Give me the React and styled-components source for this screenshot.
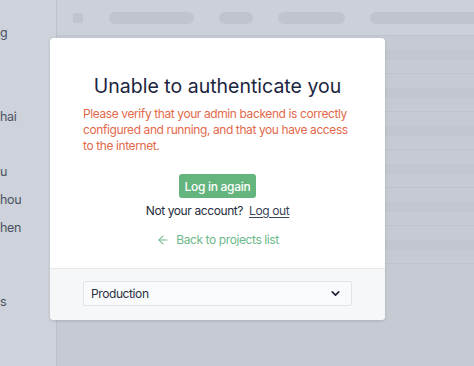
import React from 'react';
import styled, { createGlobalStyle } from 'styled-components';
import { ArrowLeft, ChevronDown } from 'lucide-react';

const GlobalStyle = createGlobalStyle`
    html, body {
        margin: 0;
        padding: 0;
        height: 100%;
        overflow: hidden;
    }
    body {
        font-family: Inter, "Noto Sans", "Liberation Sans", sans-serif;
        background: #c6cbd3;
    }
`

const Page = styled.div`
    position: relative;
    display: flex;
    width: 474px;
    height: 366px;
    overflow: hidden;
`

const Sidebar = styled.aside`
    width: 56px;
    flex-shrink: 0;
    background: #ced2da;
    border-right: 1px solid #bcc1ca;
    padding-top: 24px;
    display: flex;
    flex-direction: column;
`

const SideItem = styled.div`
    height: 28px;
    line-height: 18px;
    font-size: 12.5px;
    letter-spacing: -0.3px;
    color: #4a5263;
    margin-top: ${p => p.gap || 0}px;
    white-space: nowrap;
`

const Main = styled.main`
    flex: 1;
    display: flex;
    flex-direction: column;
`

const Header = styled.header`
    height: 36px;
    flex-shrink: 0;
    display: flex;
    align-items: center;
    gap: 25px;
    padding-left: 16px;
    background: #ccd0d8;
    border-bottom: 1px solid #bcc1ca;
    box-sizing: border-box;
`

const HeaderIcon = styled.div`
    width: 10px;
    height: 10px;
    border-radius: 3px;
    background: #bfc4cd;
    margin-right: 1px;
`

const Pill = styled.div`
    width: ${p => p.w}px;
    height: 12px;
    border-radius: 6px;
    background: #bfc4cd;
    flex-shrink: 0;
`

const Row = styled.div`
    height: 38px;
    flex-shrink: 0;
    border-bottom: 1px solid #bfc4cc;
    box-sizing: border-box;
    display: flex;
    align-items: center;
    padding-left: 16px;
`

const RowBar = styled.div`
    width: 100%;
    height: 10px;
    background: #c2c7cf;
`

const Overlay = styled.div`
    position: absolute;
    inset: 0;
    padding: 38px 0 0 50px;
`

const Modal = styled.div`
    width: 335px;
    background: #ffffff;
    border-radius: 4px;
    box-shadow: 0 1px 3px rgba(40, 48, 64, 0.18);
    overflow: hidden;
`

const Body = styled.div`
    padding: 36px 33px 20px;
    display: flex;
    flex-direction: column;
    align-items: center;
`

const Title = styled.h1`
    margin: 0;
    font-size: 19.5px;
    line-height: 24px;
    font-weight: 400;
    color: #1b2540;
`

const ErrorText = styled.p`
    margin: 8px 0 0;
    align-self: stretch;
    font-size: 12px;
    letter-spacing: -0.4px;
    line-height: 16px;
    color: #e2694b;
`

const Button = styled.button`
    margin-top: 20px;
    height: 24px;
    padding: 0 6px;
    border: none;
    border-radius: 3px;
    background: #63b47d;
    color: #ffffff;
    font-family: inherit;
    font-size: 12px;
    letter-spacing: -0.3px;
    font-weight: 500;
`

const Account = styled.div`
    margin-top: 5px;
    font-size: 12px;
    letter-spacing: -0.4px;
    line-height: 16px;
    color: #252c3b;
`

const LogOut = styled.a`
    margin-left: 6px;
    color: #3a4257;
    text-decoration: underline;
    text-underline-offset: 2px;
`

const BackLink = styled.a`
    margin-top: 13px;
    display: flex;
    align-items: center;
    gap: 6px;
    font-size: 12px;
    letter-spacing: -0.4px;
    line-height: 16px;
    color: #6cb98a;
`

const Footer = styled.div`
    background: #f6f7f8;
    border-top: 1px solid #e6e8eb;
    padding: 12px 33px 14px;
`

const Select = styled.div`
    height: 25px;
    box-sizing: border-box;
    border: 1px solid #e1e4e8;
    background: #f9fafb;
    border-radius: 2px;
    display: flex;
    align-items: center;
    justify-content: space-between;
    padding: 0 9px 0 7px;
    font-size: 12px;
    letter-spacing: -0.4px;
    color: #2a3142;
`

export default function App() {
    return (
        <Page>
            <GlobalStyle />
            <Sidebar>
                <SideItem>g</SideItem>
                <SideItem gap={56}>hai</SideItem>
                <SideItem gap={27}>u</SideItem>
                <SideItem>hou</SideItem>
                <SideItem>hen</SideItem>
                <SideItem gap={46}>s</SideItem>
            </Sidebar>
            <Main>
                <Header>
                    <HeaderIcon />
                    <Pill w={85} />
                    <Pill w={34} />
                    <Pill w={67} />
                    <Pill w={110} />
                </Header>
                {[0, 1, 2, 3, 4, 5].map(i => (
                    <Row key={i}>
                        <RowBar />
                    </Row>
                ))}
            </Main>
            <Overlay>
                <Modal>
                    <Body>
                        <Title>Unable to authenticate you</Title>
                        <ErrorText>
                            Please verify that your admin backend is correctly configured and running, and that you have access to the internet.
                        </ErrorText>
                        <Button>Log in again</Button>
                        <Account>
                            Not your account?<LogOut>Log out</LogOut>
                        </Account>
                        <BackLink>
                            <ArrowLeft size={14} strokeWidth={1.75} />
                            Back to projects list
                        </BackLink>
                    </Body>
                    <Footer>
                        <Select>
                            Production
                            <ChevronDown size={13} strokeWidth={3} color="#1b2233" />
                        </Select>
                    </Footer>
                </Modal>
            </Overlay>
        </Page>
    );
}
